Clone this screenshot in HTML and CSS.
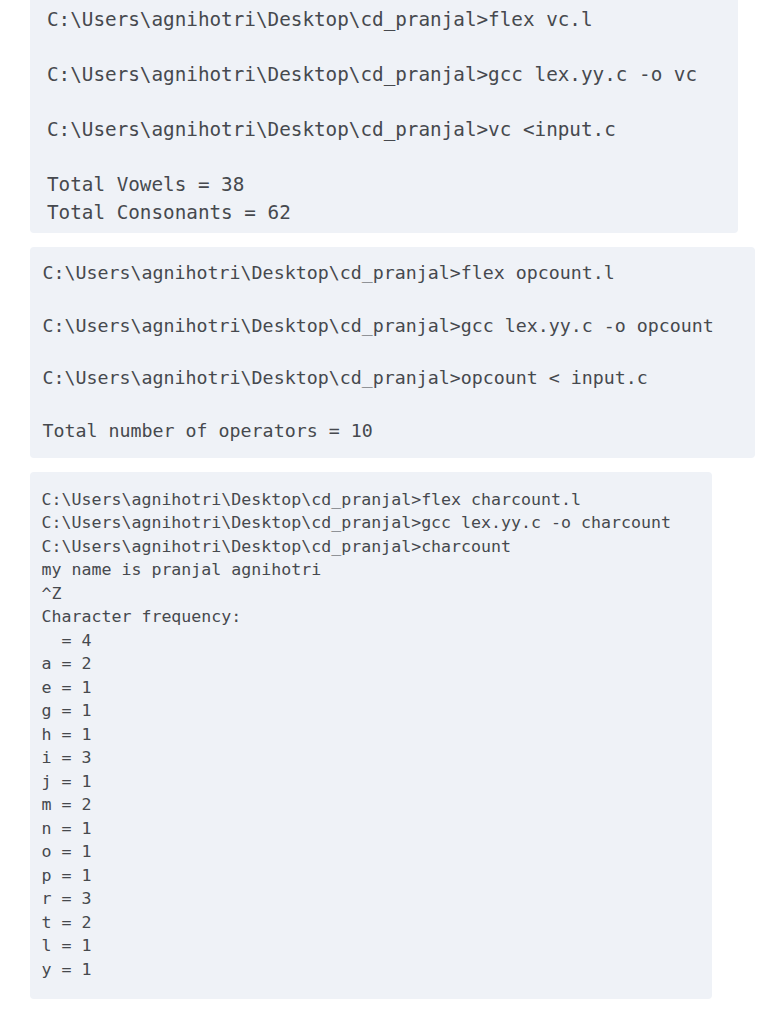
FILE: index.html
```html
<!DOCTYPE html>
<html>
<head>
<meta charset="utf-8">
<link rel="stylesheet" href="styles.css">
</head>
<body>
<main class="page">
<pre class="block block-one">C:\Users\agnihotri\Desktop\cd_pranjal>flex vc.l

C:\Users\agnihotri\Desktop\cd_pranjal>gcc lex.yy.c -o vc

C:\Users\agnihotri\Desktop\cd_pranjal>vc &lt;input.c

Total Vowels = 38
Total Consonants = 62</pre>
<pre class="block block-two">C:\Users\agnihotri\Desktop\cd_pranjal>flex opcount.l

C:\Users\agnihotri\Desktop\cd_pranjal>gcc lex.yy.c -o opcount

C:\Users\agnihotri\Desktop\cd_pranjal>opcount &lt; input.c

Total number of operators = 10</pre>
<pre class="block block-three">C:\Users\agnihotri\Desktop\cd_pranjal>flex charcount.l
C:\Users\agnihotri\Desktop\cd_pranjal>gcc lex.yy.c -o charcount
C:\Users\agnihotri\Desktop\cd_pranjal>charcount
my name is pranjal agnihotri
^Z
Character frequency:
  = 4
a = 2
e = 1
g = 1
h = 1
i = 3
j = 1
m = 2
n = 1
o = 1
p = 1
r = 3
t = 2
l = 1
y = 1</pre>
</main>
</body>
</html>
```
FILE: styles.css
```css
html, body {
  margin: 0;
  padding: 0;
  background: #ffffff;
}

.page {
  display: flex;
  flex-direction: column;
  align-items: flex-start;
  gap: 14px;
  padding-left: 30px;
}

.block {
  margin: 0;
  background: #eff2f7;
  color: #46494e;
  font-family: "DejaVu Sans Mono", "Liberation Mono", monospace;
  white-space: pre;
  border-radius: 4px;
  box-sizing: border-box;
}

.block-one {
  width: 708px;
  font-size: 19.3px;
  line-height: 27.5px;
  padding: 6px 17px 7px;
  border-radius: 0 0 4px 4px;
}

.block-two {
  width: 725px;
  font-size: 18.3px;
  line-height: 26.25px;
  padding: 13px 12.5px 14px;
}

.block-three {
  width: 682px;
  font-size: 16.6px;
  line-height: 23.5px;
  padding: 16px 11.5px 18px;
}
```
